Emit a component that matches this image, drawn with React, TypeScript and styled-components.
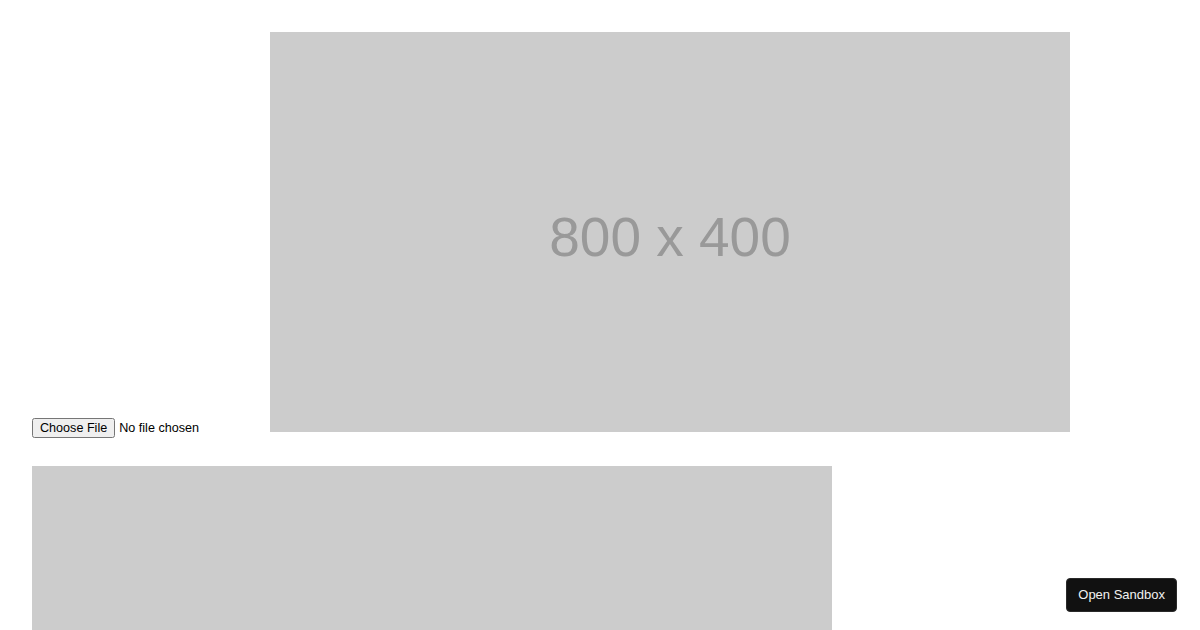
import { createGlobalStyle } from 'styled-components'
import styled from 'styled-components'

const GlobalStyle = createGlobalStyle`
  html, body {
    margin: 0;
    background: #fff;
    font-family: "Liberation Sans", Arial, sans-serif;
  }
`

const Page = styled.div`
  padding: 32px;
`

const UploadRow = styled.div`
  font-size: 13px;
`

const FileInput = styled.input`
  font-family: "Liberation Sans", Arial, sans-serif;
  font-size: 12.6px;
  width: 206px;
  margin: 0 32px 0 0;
`

const Placeholder = styled.div<{ $w: number; $h: number }>`
  display: inline-block;
  overflow: hidden;
  vertical-align: baseline;
  width: ${(p) => p.$w}px;
  height: ${(p) => p.$h}px;
  background: #cccccc;
`

const PlaceholderLabel = styled.div`
  display: flex;
  align-items: center;
  justify-content: center;
  height: 100%;
  padding-top: 10px;
  box-sizing: border-box;
  color: #999999;
  font-family: "Liberation Sans", Arial, sans-serif;
  font-size: 55px;
`

const Preview = styled(Placeholder)`
  display: block;
  margin-top: 28px;
`

const SandboxButton = styled.button`
  position: fixed;
  right: 23px;
  bottom: 18px;
  height: 34px;
  padding: 0 11px 1px;
  background: #111111;
  color: #f2f2f2;
  border: 1px solid #2a2a2a;
  border-radius: 4px;
  font-family: "Liberation Sans", Arial, sans-serif;
  font-size: 13px;
  cursor: pointer;
`

export default function App() {
  return (
    <>
      <GlobalStyle />
      <Page>
        <UploadRow>
          <FileInput type="file" />
          <Placeholder $w={800} $h={400}>
            <PlaceholderLabel>800 x 400</PlaceholderLabel>
          </Placeholder>
        </UploadRow>
        <Preview $w={800} $h={400}>
          <PlaceholderLabel>800 x 400</PlaceholderLabel>
        </Preview>
      </Page>
      <SandboxButton>Open Sandbox</SandboxButton>
    </>
  )
}
